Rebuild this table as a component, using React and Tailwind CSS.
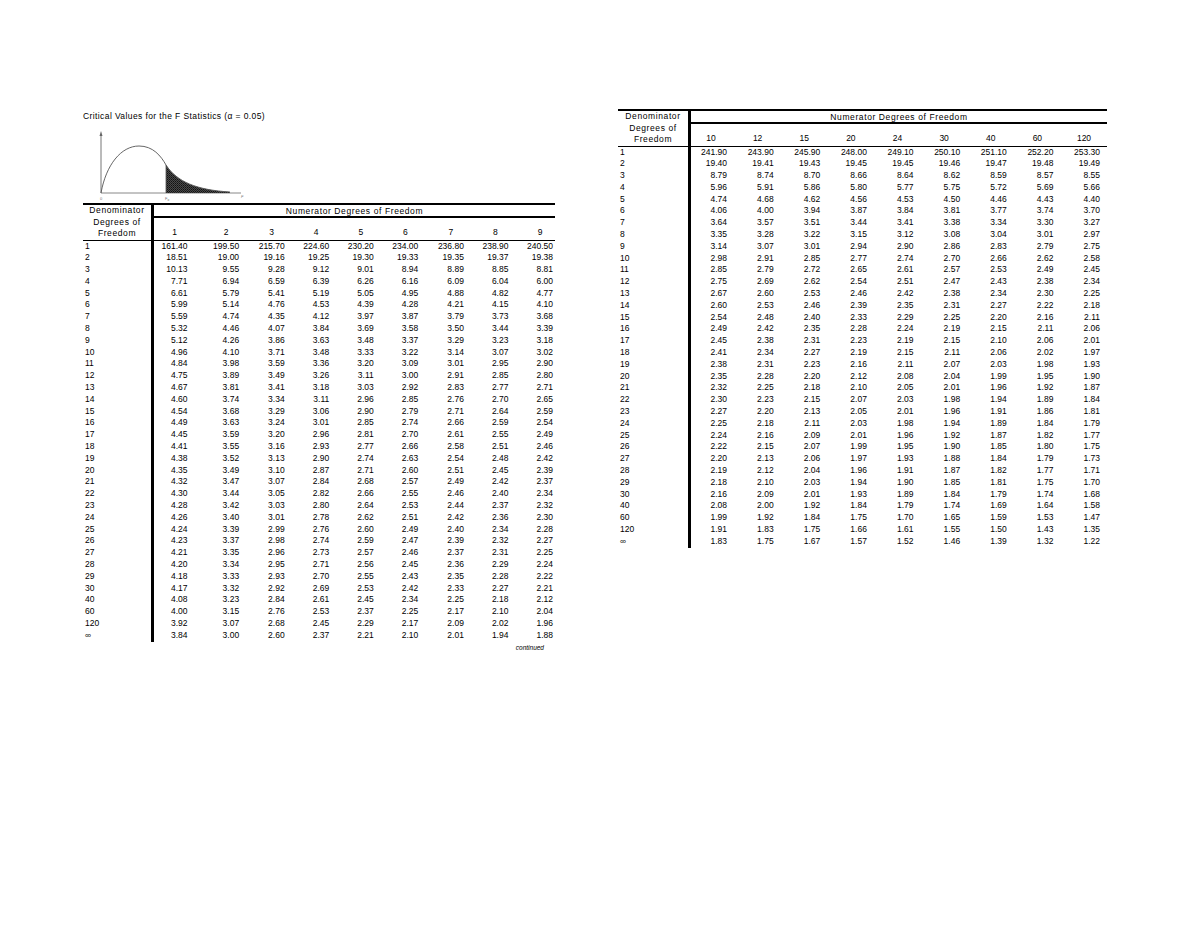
// F distribution critical values table (alpha = 0.05)

const ROWS = [
  "1", "2", "3", "4", "5", "6", "7", "8", "9", "10", "11", "12", "13", "14", "15", "16", "17",
  "18", "19", "20", "21", "22", "23", "24", "25", "26", "27", "28", "29", "30", "40", "60", "120", "∞",
];

const LEFT_COLS = ["1", "2", "3", "4", "5", "6", "7", "8", "9"];
const RIGHT_COLS = ["10", "12", "15", "20", "24", "30", "40", "60", "120"];

const LEFT = `161.40 199.50 215.70 224.60 230.20 234.00 236.80 238.90 240.50
18.51 19.00 19.16 19.25 19.30 19.33 19.35 19.37 19.38
10.13 9.55 9.28 9.12 9.01 8.94 8.89 8.85 8.81
7.71 6.94 6.59 6.39 6.26 6.16 6.09 6.04 6.00
6.61 5.79 5.41 5.19 5.05 4.95 4.88 4.82 4.77
5.99 5.14 4.76 4.53 4.39 4.28 4.21 4.15 4.10
5.59 4.74 4.35 4.12 3.97 3.87 3.79 3.73 3.68
5.32 4.46 4.07 3.84 3.69 3.58 3.50 3.44 3.39
5.12 4.26 3.86 3.63 3.48 3.37 3.29 3.23 3.18
4.96 4.10 3.71 3.48 3.33 3.22 3.14 3.07 3.02
4.84 3.98 3.59 3.36 3.20 3.09 3.01 2.95 2.90
4.75 3.89 3.49 3.26 3.11 3.00 2.91 2.85 2.80
4.67 3.81 3.41 3.18 3.03 2.92 2.83 2.77 2.71
4.60 3.74 3.34 3.11 2.96 2.85 2.76 2.70 2.65
4.54 3.68 3.29 3.06 2.90 2.79 2.71 2.64 2.59
4.49 3.63 3.24 3.01 2.85 2.74 2.66 2.59 2.54
4.45 3.59 3.20 2.96 2.81 2.70 2.61 2.55 2.49
4.41 3.55 3.16 2.93 2.77 2.66 2.58 2.51 2.46
4.38 3.52 3.13 2.90 2.74 2.63 2.54 2.48 2.42
4.35 3.49 3.10 2.87 2.71 2.60 2.51 2.45 2.39
4.32 3.47 3.07 2.84 2.68 2.57 2.49 2.42 2.37
4.30 3.44 3.05 2.82 2.66 2.55 2.46 2.40 2.34
4.28 3.42 3.03 2.80 2.64 2.53 2.44 2.37 2.32
4.26 3.40 3.01 2.78 2.62 2.51 2.42 2.36 2.30
4.24 3.39 2.99 2.76 2.60 2.49 2.40 2.34 2.28
4.23 3.37 2.98 2.74 2.59 2.47 2.39 2.32 2.27
4.21 3.35 2.96 2.73 2.57 2.46 2.37 2.31 2.25
4.20 3.34 2.95 2.71 2.56 2.45 2.36 2.29 2.24
4.18 3.33 2.93 2.70 2.55 2.43 2.35 2.28 2.22
4.17 3.32 2.92 2.69 2.53 2.42 2.33 2.27 2.21
4.08 3.23 2.84 2.61 2.45 2.34 2.25 2.18 2.12
4.00 3.15 2.76 2.53 2.37 2.25 2.17 2.10 2.04
3.92 3.07 2.68 2.45 2.29 2.17 2.09 2.02 1.96
3.84 3.00 2.60 2.37 2.21 2.10 2.01 1.94 1.88`;

const RIGHT = `241.90 243.90 245.90 248.00 249.10 250.10 251.10 252.20 253.30
19.40 19.41 19.43 19.45 19.45 19.46 19.47 19.48 19.49
8.79 8.74 8.70 8.66 8.64 8.62 8.59 8.57 8.55
5.96 5.91 5.86 5.80 5.77 5.75 5.72 5.69 5.66
4.74 4.68 4.62 4.56 4.53 4.50 4.46 4.43 4.40
4.06 4.00 3.94 3.87 3.84 3.81 3.77 3.74 3.70
3.64 3.57 3.51 3.44 3.41 3.38 3.34 3.30 3.27
3.35 3.28 3.22 3.15 3.12 3.08 3.04 3.01 2.97
3.14 3.07 3.01 2.94 2.90 2.86 2.83 2.79 2.75
2.98 2.91 2.85 2.77 2.74 2.70 2.66 2.62 2.58
2.85 2.79 2.72 2.65 2.61 2.57 2.53 2.49 2.45
2.75 2.69 2.62 2.54 2.51 2.47 2.43 2.38 2.34
2.67 2.60 2.53 2.46 2.42 2.38 2.34 2.30 2.25
2.60 2.53 2.46 2.39 2.35 2.31 2.27 2.22 2.18
2.54 2.48 2.40 2.33 2.29 2.25 2.20 2.16 2.11
2.49 2.42 2.35 2.28 2.24 2.19 2.15 2.11 2.06
2.45 2.38 2.31 2.23 2.19 2.15 2.10 2.06 2.01
2.41 2.34 2.27 2.19 2.15 2.11 2.06 2.02 1.97
2.38 2.31 2.23 2.16 2.11 2.07 2.03 1.98 1.93
2.35 2.28 2.20 2.12 2.08 2.04 1.99 1.95 1.90
2.32 2.25 2.18 2.10 2.05 2.01 1.96 1.92 1.87
2.30 2.23 2.15 2.07 2.03 1.98 1.94 1.89 1.84
2.27 2.20 2.13 2.05 2.01 1.96 1.91 1.86 1.81
2.25 2.18 2.11 2.03 1.98 1.94 1.89 1.84 1.79
2.24 2.16 2.09 2.01 1.96 1.92 1.87 1.82 1.77
2.22 2.15 2.07 1.99 1.95 1.90 1.85 1.80 1.75
2.20 2.13 2.06 1.97 1.93 1.88 1.84 1.79 1.73
2.19 2.12 2.04 1.96 1.91 1.87 1.82 1.77 1.71
2.18 2.10 2.03 1.94 1.90 1.85 1.81 1.75 1.70
2.16 2.09 2.01 1.93 1.89 1.84 1.79 1.74 1.68
2.08 2.00 1.92 1.84 1.79 1.74 1.69 1.64 1.58
1.99 1.92 1.84 1.75 1.70 1.65 1.59 1.53 1.47
1.91 1.83 1.75 1.66 1.61 1.55 1.50 1.43 1.35
1.83 1.75 1.67 1.57 1.52 1.46 1.39 1.32 1.22`;

const parse = (s) => s.split("\n").map((l) => l.trim().split(/\s+/));

const NUM_FONT = { fontFamily: '"Liberation Sans Narrow", "Arial Narrow", "Liberation Sans", Arial, sans-serif' };

function FTable({ cols, data, labelW, gridCols, cellPad, headW }) {
  return (
    <div className="border-t-2 border-black">
      {/* header */}
      <div className="flex">
        <div className={`${labelW} text-center text-[8.5px] leading-[11.5px] tracking-[0.6px]`}>
          Denominator
          <br />
          Degrees of
          <br />
          Freedom
        </div>
        <div className="flex-1 border-l-[3px] border-black">
          <div className="h-[13px] leading-[13px] text-center text-[8.5px] tracking-[0.6px] border-b-2 border-black">
            Numerator Degrees of Freedom
          </div>
          <div className={`grid ${gridCols} h-[20px] items-end`}>
            {cols.map((c, i) => (
              <div key={c} className={`text-right leading-[12px] text-[8.5px] ${cellPad[i]}`} style={NUM_FONT}>
                <span className={`inline-block ${headW} text-center`}>{c}</span>
              </div>
            ))}
          </div>
        </div>
      </div>

      {/* body */}
      <div className="border-t border-black">
        {data.map((row, r) => (
          <div key={ROWS[r]} className="flex h-[11.8px] leading-[11.8px] text-[8.5px]" style={NUM_FONT}>
            <div className={`${labelW} pl-[2px]`}>{ROWS[r]}</div>
            <div className={`flex-1 border-l-[3px] border-black grid ${gridCols}`}>
              {row.map((v, i) => (
                <div key={i} className={`text-right ${cellPad[i]}`}>
                  {v}
                </div>
              ))}
            </div>
          </div>
        ))}
      </div>
    </div>
  );
}

function FCurve() {
  return (
    <svg width="170" height="78" viewBox="0 0 170 78" className="block ml-[2px] mt-[3px]">
      <defs>
        <pattern id="speckle" width="2" height="2" patternUnits="userSpaceOnUse">
          <rect width="2" height="2" fill="#4a4a4a" />
          <rect width="1" height="1" fill="#111" />
          <rect x="1" y="1" width="1" height="1" fill="#222" />
        </pattern>
      </defs>
      {/* axes */}
      <line x1="16" y1="9" x2="16" y2="68" stroke="#777" strokeWidth="1" />
      <path d="M14.5 11 L16 6 L17.5 11 Z" fill="#666" />
      <line x1="16" y1="68" x2="156" y2="68" stroke="#888" strokeWidth="1" />
      {/* shaded tail */}
      <path d="M81 40 C 92 57, 112 65, 145 67 L 145 68 L 81 68 Z" fill="url(#speckle)" />
      <line x1="81" y1="40" x2="81" y2="68" stroke="#555" strokeWidth="0.8" />
      {/* density curve */}
      <path
        d="M16 68 C 21 40, 36 21, 54 21 C 68 21, 76 31, 81 40 C 92 57, 112 65, 145 67"
        fill="none"
        stroke="#555"
        strokeWidth="0.9"
      />
      <text x="15" y="75" fontSize="4" fill="#777" fontFamily="Liberation Sans, sans-serif">0</text>
      <text x="80" y="75" fontSize="4" fill="#777" fontFamily="Liberation Sans, sans-serif">F<tspan fontSize="3" dy="1">α</tspan></text>
      <text x="156" y="73" fontSize="4" fill="#777" fontStyle="italic" fontFamily="Liberation Sans, sans-serif">F</text>
    </svg>
  );
}

export default function App() {
  const left = parse(LEFT);
  const right = parse(RIGHT);
  const leftPad = ["pr-[11px]", "pr-[4px]", "pr-[3px]", "pr-[3px]", "pr-[3px]", "pr-[3px]", "pr-[2px]", "pr-[2px]", "pr-[2px]"];
  const rightPad = ["pr-[7px]", "pr-[7px]", "pr-[7px]", "pr-[7px]", "pr-[7px]", "pr-[7px]", "pr-[7px]", "pr-[7px]", "pr-[7px]"];

  return (
    <div
      className="w-[1200px] h-[927px] bg-white text-black overflow-hidden"
      style={{ fontFamily: '"Liberation Sans", Arial, sans-serif' }}
    >
      <div className="flex items-start pt-[109px]">
        {/* left sheet: cols 1-9 */}
        <div className="ml-[83px] w-[472px]">
          <p className="mt-[2px] text-[8.5px] leading-[11px] tracking-[0.4px]">
            Critical Values for the F Statistics (α = 0.05)
          </p>
          <FCurve />
          <FTable
            cols={LEFT_COLS}
            data={left}
            labelW="w-[68px]"
            gridCols="grid-cols-9"
            cellPad={leftPad}
            headW="w-[26px]"
          />
          <p className="text-right pr-[11px] text-[6.5px] italic leading-[10px] mt-[1px]">continued</p>
        </div>

        {/* right sheet: cols 10-120 */}
        <div className="ml-[63px] w-[489px]">
          <FTable
            cols={RIGHT_COLS}
            data={right}
            labelW="w-[70px]"
            gridCols="grid-cols-[43px_repeat(8,1fr)]"
            cellPad={rightPad}
            headW="w-[32px]"
          />
        </div>
      </div>
    </div>
  );
}
